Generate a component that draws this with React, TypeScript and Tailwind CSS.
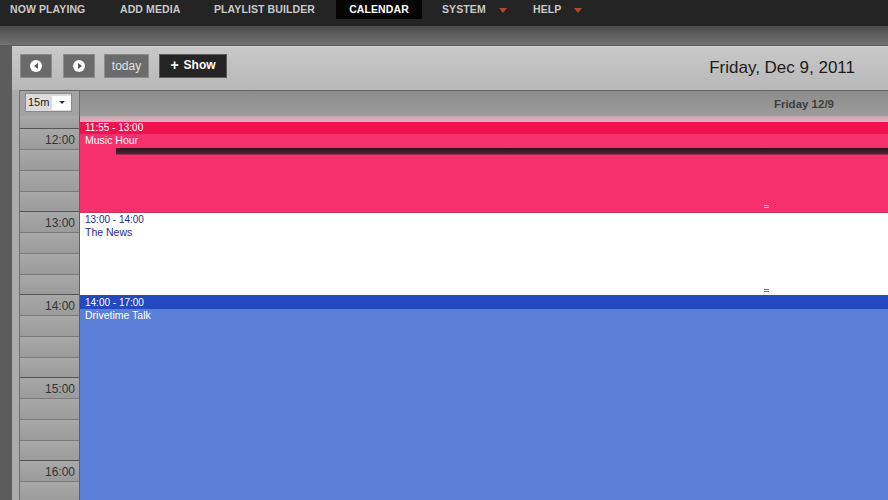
import React from "react";

const Tri = () => (
  <span className="ml-[13px] inline-block w-0 h-0 border-l-[4px] border-r-[4px] border-t-[5px] border-l-transparent border-r-transparent border-t-[#b3472c] mt-[2px]" />
);

function NavBar() {
  return (
    <div className="h-[26px] bg-[#242424] flex items-start text-[10.5px] font-bold tracking-[0.1px] text-[#c9c9c9]">
      <div className="w-[120px] pl-[10px] h-[19px] flex items-center shrink-0">NOW PLAYING</div>
      <div className="w-[94px] h-[19px] flex items-center shrink-0">ADD MEDIA</div>
      <div className="w-[122px] h-[19px] flex items-center shrink-0">PLAYLIST BUILDER</div>
      <div className="w-[86px] h-[19px] flex items-center justify-center shrink-0 bg-[#050505] text-white">CALENDAR</div>
      <div className="w-[20px] shrink-0" />
      <div className="w-[91px] h-[19px] flex items-center shrink-0">
        SYSTEM
        <Tri />
      </div>
      <div className="h-[19px] flex items-center shrink-0">
        HELP
        <Tri />
      </div>
    </div>
  );
}

function CircleBtn({ dir }: { dir: "l" | "r" }) {
  return (
    <button className="w-[32px] h-[24px] bg-[#6b6b6b] border border-[#8c8c8c] flex items-center justify-center">
      <span className="w-[12px] h-[12px] rounded-full bg-white flex items-center justify-center">
        {dir === "l" ? (
          <span className="w-0 h-0 border-t-[3px] border-b-[3px] border-r-[4px] border-t-transparent border-b-transparent border-r-[#555] mr-[1px]" />
        ) : (
          <span className="w-0 h-0 border-t-[3px] border-b-[3px] border-l-[4px] border-t-transparent border-b-transparent border-l-[#555] ml-[1px]" />
        )}
      </span>
    </button>
  );
}

function Toolbar() {
  return (
    <div className="h-[44px] bg-gradient-to-b from-[#c8c8c8] to-[#b8b8b8] border-t border-[#d4d4d4] flex items-start pt-[7px] pl-[8px] pr-[33px]">
      <CircleBtn dir="l" />
      <div className="w-[11px]" />
      <CircleBtn dir="r" />
      <div className="w-[9px]" />
      <button className="w-[45px] h-[24px] bg-[#6b6b6b] border border-[#8c8c8c] text-[12px] text-[#e2e2e2] flex items-center justify-center pb-[1px]">
        today
      </button>
      <div className="w-[10px]" />
      <button className="w-[68px] h-[24px] bg-[#242424] border border-[#5a5a5a] text-[12px] font-bold text-white flex items-center justify-center gap-[5px] pb-[2px]">
        <span className="text-[14px] leading-none">+</span>
        <span>Show</span>
      </button>
      <div className="flex-1" />
      <div className="text-[17px] text-[#1c1c1c] leading-none mt-[5px]">Friday, Dec 9, 2011</div>
    </div>
  );
}

function Header() {
  return (
    <div className="h-[26px] flex border-t border-[#666]">
      <div className="w-[60px] bg-[#a3a3a3] border-r border-[#6d6d6d] flex items-start pt-[2px] pl-[5px]">
        <div className="w-[47px] h-[19px] bg-[#dcdcdc] border border-[#8a8a8a] flex items-center pl-[2px]">
          <span className="text-[11px] text-[#222]">15m</span>
          <span className="ml-[3px] w-[20px] h-[14px] bg-white flex items-center justify-center">
            <span className="w-0 h-0 border-l-[3px] border-r-[3px] border-t-[3px] border-l-transparent border-r-transparent border-t-[#333]" />
          </span>
        </div>
      </div>
      <div className="flex-1 bg-gradient-to-b from-[#8c8c8c] to-[#9c9c9c] flex items-center justify-end pr-[54px] pt-[2px]">
        <span className="text-[11.5px] font-bold text-[#3e3e3e]">Friday 12/9</span>
      </div>
    </div>
  );
}

const hours = ["12:00", "13:00", "14:00", "15:00", "16:00"];

function Gutter() {
  return (
    <div className="w-[60px] shrink-0 border-r border-[#5f5f5f] flex flex-col overflow-hidden">
      <div className="h-[13px] shrink-0 bg-gradient-to-b from-[#a9a9a9] to-[#9d9d9d] border-b border-[#555]" />
      {hours.map((h) => (
        <div key={h} className="h-[83px] shrink-0 flex flex-col border-b border-[#555]">
          <div className="h-[21px] bg-gradient-to-b from-[#a8a8a8] to-[#9b9b9b] border-b border-[#7c7c7c] flex items-center justify-end pr-[4px] pt-[1px]">
            <span className="text-[12px] text-[#333] leading-none">{h}</span>
          </div>
          <div className="h-[21px] bg-gradient-to-b from-[#a8a8a8] to-[#9b9b9b] border-b border-[#7c7c7c]" />
          <div className="h-[21px] bg-gradient-to-b from-[#a8a8a8] to-[#9b9b9b] border-b border-[#7c7c7c]" />
          <div className="flex-1 bg-gradient-to-b from-[#a8a8a8] to-[#9b9b9b]" />
        </div>
      ))}
    </div>
  );
}

function Events() {
  return (
    <div className="flex-1 flex flex-col overflow-hidden">
      <div className="h-[6px] shrink-0 bg-gradient-to-b from-[#b9aab0] to-[#f2aabd]" />
      {/* Music Hour */}
      <div className="h-[91px] shrink-0 relative bg-[#f6306c] flex flex-col border-b border-[#c0385e]">
        <div className="h-[12px] bg-[#f2114f] pl-[5px] text-[10px] leading-[12px] text-white">11:55 - 13:00</div>
        <div className="pl-[5px] text-[10.5px] leading-[13px] text-white">Music Hour</div>
        <div className="absolute left-[36px] right-0 top-[26px] h-[7px] bg-gradient-to-b from-[#2a1219] to-[#4f2434] border-b border-[#9a2a4e]" />
        <div className="absolute left-[684px] bottom-[4px] w-[5px] h-[3px] border-t border-b border-[#f7c6d4]" />
      </div>
      {/* The News */}
      <div className="h-[83px] shrink-0 relative bg-white border-b border-[#4a4a6a] flex flex-col pt-[1px]">
        <div className="pl-[5px] text-[10px] leading-[12px] text-[#2b2a8e]">13:00 - 14:00</div>
        <div className="pl-[5px] text-[10.5px] leading-[13px] text-[#2b2a8e]">The News</div>
        <div className="absolute left-[684px] bottom-[3px] w-[5px] h-[3px] border-t border-b border-[#6f6f90]" />
      </div>
      {/* Drivetime */}
      <div className="flex-1 bg-[#5b7fd9] flex flex-col">
        <div className="h-[13px] bg-[#2448bf] pl-[5px] text-[10px] leading-[13px] text-white">14:00 - 17:00</div>
        <div className="pl-[5px] text-[10.5px] leading-[13px] text-white">Drivetime Talk</div>
      </div>
    </div>
  );
}

export default function App() {
  return (
    <div
      className="w-[888px] h-[500px] overflow-hidden bg-[#5c5c5c] flex flex-col"
      style={{ fontFamily: '"Liberation Sans", Arial, sans-serif' }}
    >
      <NavBar />
      <div className="h-[20px] shrink-0 bg-gradient-to-b from-[#4c4c4c] to-[#727272] border-b border-[#5a5a5a]" />
      <div className="flex-1 flex min-h-0">
        <div className="w-[12px] shrink-0 bg-[#5c5c5c]" />
        <div className="flex-1 flex flex-col min-h-0">
          <Toolbar />
          <div className="flex-1 flex min-h-0">
            <div className="w-[8px] shrink-0 bg-[#ababab] border-r border-[#707070]" />
            <div className="flex-1 flex flex-col min-h-0">
              <Header />
              <div className="flex-1 flex min-h-0 overflow-hidden">
                <Gutter />
                <Events />
              </div>
            </div>
          </div>
        </div>
      </div>
    </div>
  );
}
